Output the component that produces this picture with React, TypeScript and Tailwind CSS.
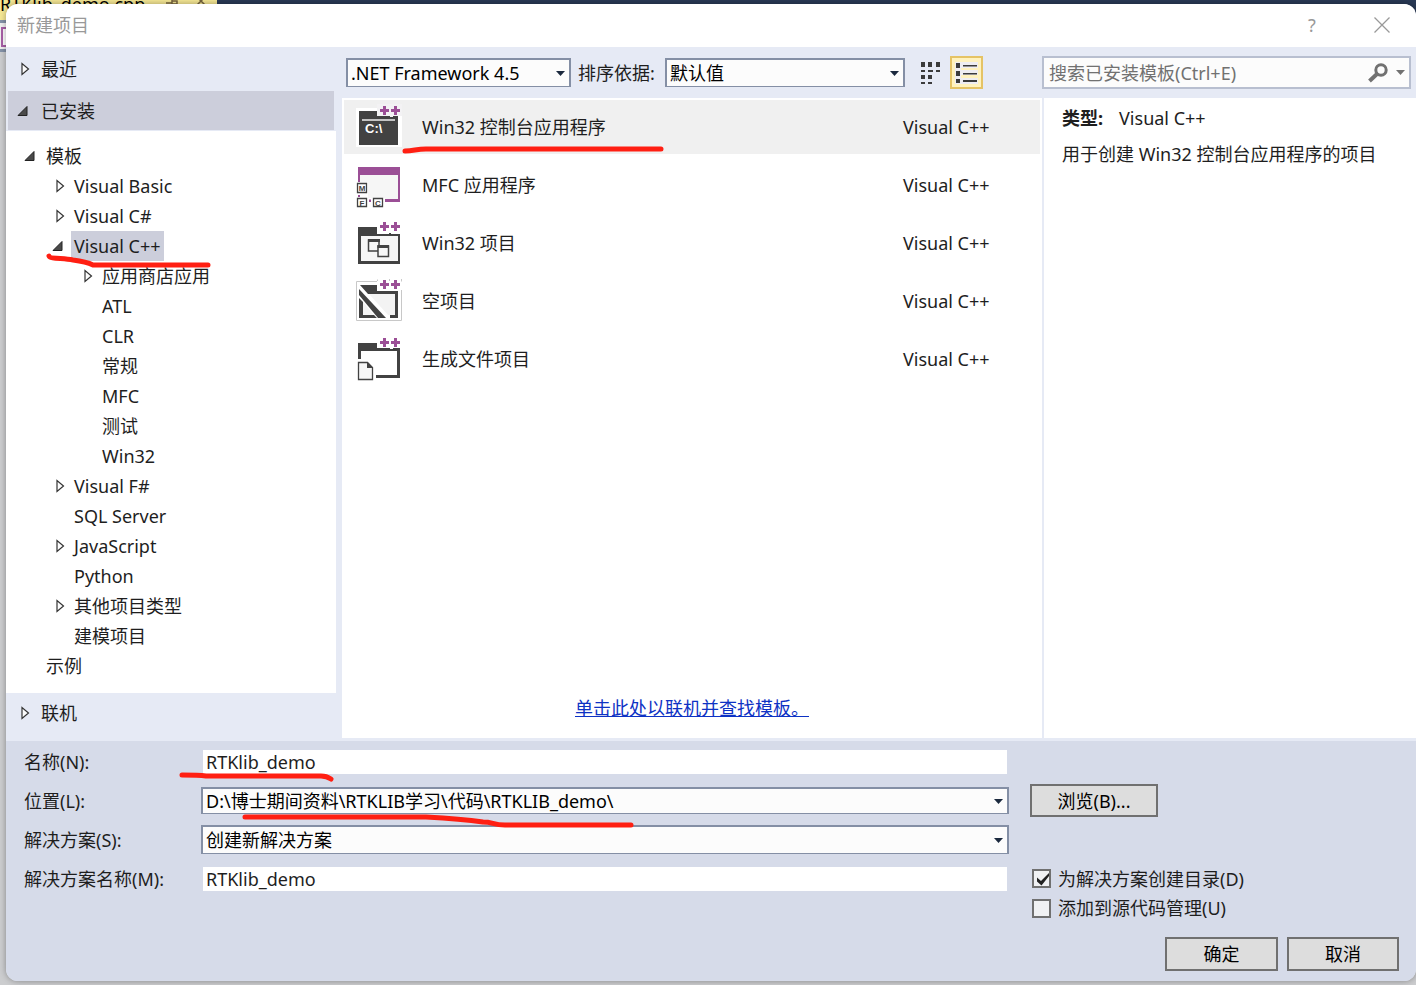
import React, { useState } from 'react';

interface TreeItem {
  label: string;
  level: 0 | 1 | 2;
  arrow?: 'open' | 'closed';
}

const TREE: TreeItem[] = [
  { label: '模板', level: 0, arrow: 'open' },
  { label: 'Visual Basic', level: 1, arrow: 'closed' },
  { label: 'Visual C#', level: 1, arrow: 'closed' },
  { label: 'Visual C++', level: 1, arrow: 'open' },
  { label: '应用商店应用', level: 2, arrow: 'closed' },
  { label: 'ATL', level: 2 },
  { label: 'CLR', level: 2 },
  { label: '常规', level: 2 },
  { label: 'MFC', level: 2 },
  { label: '测试', level: 2 },
  { label: 'Win32', level: 2 },
  { label: 'Visual F#', level: 1, arrow: 'closed' },
  { label: 'SQL Server', level: 1 },
  { label: 'JavaScript', level: 1, arrow: 'closed' },
  { label: 'Python', level: 1 },
  { label: '其他项目类型', level: 1, arrow: 'closed' },
  { label: '建模项目', level: 1 },
  { label: '示例', level: 0 },
];

const INDENT = { 0: 'pl-4', 1: 'pl-11', 2: 'pl-18' };

const Arrow = ({ state }: { state?: 'open' | 'closed' }) => (
  <svg width="20" height="14" viewBox="0 0 20 14" className="shrink-0" aria-hidden="true">
    {state === 'open' && <path d="M11 2.5V11.5H2Z" fill="#4a4a4a" stroke="#222" strokeWidth="1" />}
    {state === 'closed' && <path d="M6 1.5V12.5L12.5 7Z" fill="#fcfcfc" stroke="#333" strokeWidth="1.2" />}
  </svg>
);

// hand-drawn red marker line, laid over the item it underlines
const Marker = ({ d }: { d: string }) => (
  <svg className="pointer-events-none absolute top-0 left-0 z-10 overflow-visible" width="10" height="10" aria-hidden="true">
    <path d={d} fill="none" stroke="#ff1f12" strokeWidth="5" strokeLinecap="round" strokeLinejoin="round" />
  </svg>
);

const PlusPlus = ({ halo = '#fff' }: { halo?: string }) => (
  <g>
    <path d="M21 0H46V12H37V13H34V12H21Z" fill={halo} />
    <path d="M27 2h3v3h3v3h-3v3h-3v-3h-3v-3h3ZM38 2h3v3h3v3h-3v3h-3v-3h-3v-3h3Z" fill="#9b4f96" />
  </g>
);

const ConsoleIcon = () => (
  <svg width="48" height="46" viewBox="0 0 48 46" aria-hidden="true">
    <path d="M0 4H46V43H0Z" fill="#fff" />
    <path d="M3 7H42V41H3Z" fill="#424242" />
    <path d="M6 16H39" stroke="#f0f0f0" strokeWidth="1.500" />
    <PlusPlus halo="#f3f2f4" />
    <text x="9" y="29" fontSize="13" fontWeight="700" fill="#fff" fontFamily="Liberation Sans">C:\</text>
  </svg>
);

const MfcIcon = () => (
  <svg width="48" height="46" viewBox="0 0 48 46" aria-hidden="true">
    <path d="M2 5H44V40H2Z" fill="#9b4f96" />
    <path d="M4 13H42V37H4Z" fill="#f6f6f6" />
    <path d="M0 20H12V46H0ZM12 36H29V46H12Z" fill="#fff" />
    <path d="M2 33H4V35H2ZM13 37.500H15V40H13Z" fill="#9b4f96" />
    <g fill="#fff" stroke="#424242" strokeWidth="1.300">
      <path d="M1.500 21.500H10.500V30.500H1.500ZM1.500 36.500H10.500V44.500H1.500ZM17.500 36.500H26.500V44.500H17.500Z" />
    </g>
    <g fill="#424242" fontSize="8" fontWeight="700" fontFamily="Liberation Sans">
      <text x="2.700" y="29">M</text>
      <text x="3.500" y="43.500">F</text>
      <text x="19" y="43.500">C</text>
    </g>
  </svg>
);

const Win32Icon = () => (
  <svg width="48" height="46" viewBox="0 0 48 46" aria-hidden="true">
    <path d="M2 7H21V14H44V44H2Z" fill="#424242" />
    <path d="M5 16H42V41H5Z" fill="#f6f6f6" />
    <PlusPlus />
    <path d="M33 13H35V15H33Z" fill="#424242" />
    <path d="M12.500 20H23V31H12.500Z" fill="#f6f6f6" stroke="#424242" strokeWidth="1.500" />
    <path d="M12 19H24V22H12Z" fill="#424242" />
    <path d="M22 26H32.500V36.500H22Z" fill="#f6f6f6" stroke="#424242" strokeWidth="1.500" />
    <path d="M21.500 25H33V28H21.500Z" fill="#424242" />
  </svg>
);

const EmptyIcon = () => (
  <svg width="48" height="46" viewBox="0 0 48 46" aria-hidden="true">
    <path d="M.5 3.500H45.500V42.500H.5Z" fill="#fff" stroke="#c8c8c8" />
    {/* folder in two halves either side of the slash */}
    <path d="M4 7H21V13H42V40H34V37H39V16H12Z" fill="#424242" />
    <path d="M13 16H39V37H32Z" fill="#f3f3f3" />
    <path d="M3 20L7 24V37H18L21 40H3Z" fill="#424242" />
    <path d="M7 24V37H18Z" fill="#f3f3f3" />
    <path d="M3 11V17L22 40H30Z" fill="#424242" />
    <PlusPlus />
    <path d="M21.500 3V1.500M33.500 1V3M45.500 1V3.500" stroke="#c8c8c8" />
  </svg>
);

const MakefileIcon = () => (
  <svg width="48" height="46" viewBox="0 0 48 46" aria-hidden="true">
    <path d="M2 7H22V12H44V42H20V39H41V15H5V23H2Z" fill="#424242" />
    <PlusPlus />
    <path d="M2.500 26.500H11.500L16.500 31.500V43.500H2.500Z" fill="#f6f6f6" stroke="#424242" strokeWidth="1.300" />
    <path d="M11 26V32H17Z" fill="#424242" />
  </svg>
);

const TEMPLATES = [
  { name: 'Win32 控制台应用程序', icon: <ConsoleIcon /> },
  { name: 'MFC 应用程序', icon: <MfcIcon /> },
  { name: 'Win32 项目', icon: <Win32Icon /> },
  { name: '空项目', icon: <EmptyIcon /> },
  { name: '生成文件项目', icon: <MakefileIcon /> },
];

interface DropDownProps {
  id: string;
  options: string[];
  className: string;
  label?: string;
}

const DropDown: React.FC<DropDownProps> = ({ id, options, className, label }) => (
  <div className={`relative ${className}`}>
    <select
      id={id}
      aria-label={label}
      className="block h-full w-full appearance-none border-2 border-b border-[#848fa5] bg-[#fcfcfc] pr-6 pl-[3px] text-black outline-none"
    >
      {options.map((o) => <option key={o}>{o}</option>)}
    </select>
    <svg className="pointer-events-none absolute top-1/2 right-1.5 -mt-0.5" width="9" height="5" viewBox="0 0 9 5" aria-hidden="true">
      <path d="M0 0H9L4.500 5Z" fill="#1b293e" />
    </svg>
  </div>
);

export default function App() {
  const [node, setNode] = useState('Visual C++');
  const [template, setTemplate] = useState(0);
  const [name, setName] = useState('RTKlib_demo');
  const [solution, setSolution] = useState('RTKlib_demo');
  const [makeDir, setMakeDir] = useState(true);
  const [sourceControl, setSourceControl] = useState(false);

  return (
    <div className="relative isolate flex min-h-screen flex-col overflow-hidden bg-[#cccdcf] pt-1 pb-1 pl-1.5 text-lg leading-6 text-[#1e1e1e] [font-family:'Noto_Sans','Noto_Sans_CJK_SC',sans-serif]">
      {/* editor window behind the dialog */}
      <div className="absolute inset-x-0 top-0 -z-10 h-5 bg-[#293955]">
        <div className="relative h-5 w-[217px] bg-[#f5e794] text-black">
          <span className="absolute -top-2 left-0">RTKlib_demo.cpp</span>
          <svg className="absolute top-0 left-[166px]" width="44" height="6" viewBox="0 0 44 6" aria-hidden="true">
            <path d="M0 3H6M6 0V5M6 1H11V4H6M31 5L39 -3M39 5L33 -1" fill="none" stroke="#75633d" strokeWidth="1.500" />
          </svg>
        </div>
      </div>
      <div className="absolute top-5 left-0 -z-10 h-8 w-5 border-y-3 border-[#8592a8] bg-[#f0f0f0]">
        <div className="mt-1 ml-px h-5 w-5 border-2 border-[#a85fa6] bg-white" />
      </div>

      <main className="flex flex-1 flex-col overflow-hidden rounded-xl bg-[#e6eaf5] shadow-[0_0_6px_rgba(0,0,0,0.35)]">
        <header className="flex h-[43px] items-center bg-white pb-0.5 pl-[11px] text-[#999]">
          <h1>新建项目</h1>
          <button aria-label="帮助" className="ml-auto w-8">?</button>
          <button aria-label="关闭" className="mr-[26px] ml-[46px]">
            <svg width="16" height="16" viewBox="0 0 16 16" aria-hidden="true">
              <path d="M.5 .5L15.500 15.500M15.500 .5L.5 15.500" stroke="#999" strokeWidth="1.300" />
            </svg>
          </button>
        </header>

        <div className="flex flex-1">
          <nav className="mr-1.5 flex w-[330px] flex-col">
            <button className="flex h-11 items-center pl-2.5"><Arrow state="closed" /><span className="pl-[5px]">最近</span></button>
            <button className="mx-0.5 mb-px flex h-[39px] items-center bg-[#cccedb] pl-2"><Arrow state="open" /><span className="pl-[5px]">已安装</span></button>
            <ul className="flex-1 bg-white pt-2.5 pl-px">
              {TREE.map((item) => (
                <li key={item.label}>
                  <button onClick={() => setNode(item.label)} className={`relative flex h-[30px] items-center ${INDENT[item.level]}`}>
                    <Arrow state={item.arrow} />
                    <span className={`flex h-full items-center px-[3px] ${node === item.label ? 'bg-[#cccedb]' : ''}`}>{item.label}</span>
                    {item.label === 'Visual C++' && <Marker d="M42 25C43 28 55 27 66 29C74 30 82 32 86 34L201 34" />}
                  </button>
                </li>
              ))}
            </ul>
            <button className="flex h-12 items-center pb-2 pl-2.5"><Arrow state="closed" /><span className="pl-[5px]">联机</span></button>
          </nav>

          <div className="flex min-w-0 flex-1 flex-col">
            <div className="flex h-[51px] items-center pr-[5px] pl-1">
              <DropDown id="framework" label="框架" className="h-[29px] w-[225px]" options={['.NET Framework 4.5', '.NET Framework 4']} />
              <label htmlFor="sort" className="ml-[7px] w-20">排序依据:</label>
              <DropDown id="sort" className="ml-[7px] h-[29px] w-60" options={['默认值', '名称升序', '名称降序']} />
              <button aria-label="小图标" className="ml-2 flex h-[33px] w-[33px] items-center justify-center">
                <svg width="20" height="22" viewBox="0 0 20 22" fill="#3b3b3b" aria-hidden="true">
                  <path d="M1 0h4v5h-4zM8 0h4v5h-4zM16 0h4v5h-4zM1 8h4v2h-4zM8 8h5v2h-5zM16 8h4v2h-4zM1 13h4v4h-4zM8 13h4v4h-4zM1 20h4v2h-4zM8 20h4v2h-4z" />
                </svg>
              </button>
              <button aria-label="列表" className="ml-1 flex h-[33px] w-[33px] items-center justify-center border-2 border-[#e5c365] bg-[#fff2be]">
                <svg width="23" height="22" viewBox="0 0 23 22" aria-hidden="true">
                  <path d="M0 0H23V6H6V22H0ZM6 8H23V13H6ZM6 16H23V22H6Z" fill="#eeedf2" />
                  <path d="M1 1h4v5h-4zM1 9h4v5h-4zM1 17h4v4h-4zM8 3h14v1.500h-14zM8 11h14v1.500h-14zM8 18h14v2h-14z" fill="#3b3b3b" />
                </svg>
              </button>
              <div className="ml-auto flex h-[33px] w-[369px] items-center border-2 border-[#b8bfd0] bg-[#fcfcfc] pr-1">
                <input aria-label="搜索已安装模板" placeholder="搜索已安装模板(Ctrl+E)" className="min-w-0 flex-1 bg-transparent pl-[5px] outline-none placeholder:text-[#717171]" />
                <svg width="20" height="20" viewBox="0 0 20 20" aria-hidden="true">
                  <circle cx="13" cy="7" r="5.200" fill="none" stroke="#717171" strokeWidth="3" />
                  <path d="M9 11L1.500 18" stroke="#717171" strokeWidth="4" />
                </svg>
                <svg className="ml-2" width="9" height="5" viewBox="0 0 9 5" aria-hidden="true"><path d="M0 0H9L4.500 5Z" fill="#717171" /></svg>
              </div>
            </div>

            <div className="flex flex-1 gap-0.5 pb-[3px]">
              <section className="flex min-w-0 flex-1 flex-col bg-white p-0.5">
                <ul className="flex flex-col gap-1">
                  {TEMPLATES.map((t, i) => (
                    <li key={t.name}>
                      <button onClick={() => setTemplate(i)} className={`relative flex h-[54px] w-full items-center pl-3 text-left ${template === i ? 'bg-[#f0f0f0]' : ''}`}>
                        {t.icon}
                        <span className="ml-[18px] flex-1">{t.name}</span>
                        <span className="w-[137px]">Visual C++</span>
                        {i === 0 && <Marker d="M61 51C70 51 72 49 82 49L317 49" />}
                      </button>
                    </li>
                  ))}
                </ul>
                <a href="#online" className="mt-auto mb-4 self-center text-[#0e32c4] underline">单击此处以联机并查找模板。</a>
              </section>
              <aside className="w-[372px] bg-white pt-2 pl-[18px]">
                <p><b className="mr-4 inline-block">类型:</b>Visual C++</p>
                <p className="mt-3">用于创建 Win32 控制台应用程序的项目</p>
              </aside>
            </div>
          </div>
        </div>

        <form className="bg-[#d6dbe9] pt-px pr-[17px] pb-2.5 pl-[18px]" onSubmit={(e) => e.preventDefault()}>
          <div className="grid auto-rows-[39px] grid-cols-[177px_1fr_390px] items-center">
            <label htmlFor="name">名称(N):</label>
            <div className="relative px-0.5">
              <input id="name" value={name} onChange={(e) => setName(e.target.value)} className="block h-6 w-full bg-white pl-[3px] outline-none" />
              <Marker d="M-19 25C-8 25 -2 25 5 26L120 26C125 26 127 27 130 29" />
            </div>
            <span />

            <label htmlFor="location">位置(L):</label>
            <div className="relative">
              <DropDown id="location" className="h-[27px]" options={['D:\\博士期间资料\\RTKLIB学习\\代码\\RTKLIB_demo\\']} />
              <Marker d="M44 30L225 30C245 31 262 32 282 35C292 35 292 38 304 38L430 38" />
            </div>
            <button className="ml-[21px] h-[33px] w-32 border-2 border-[#707070] bg-[#ddd] text-black">浏览(B)...</button>

            <label htmlFor="solution">解决方案(S):</label>
            <DropDown id="solution" className="h-[29px]" options={['创建新解决方案', '添加到解决方案']} />
            <span />

            <label htmlFor="solution-name">解决方案名称(M):</label>
            <div className="px-0.5">
              <input id="solution-name" value={solution} onChange={(e) => setSolution(e.target.value)} className="block h-6 w-full bg-white pl-[3px] outline-none" />
            </div>
            <CheckBox label="为解决方案创建目录(D)" checked={makeDir} onChange={setMakeDir} />
          </div>
          <div className="grid h-5 grid-cols-[1fr_390px] items-center">
            <span />
            <CheckBox label="添加到源代码管理(U)" checked={sourceControl} onChange={setSourceControl} />
          </div>
          <div className="mt-[19px] flex justify-end gap-[9px]">
            <button type="submit" className="h-[34px] w-[113px] border-2 border-[#707070] bg-[#ddd] text-black">确定</button>
            <button type="button" className="h-[34px] w-[112px] border-2 border-[#707070] bg-[#ddd] text-black">取消</button>
          </div>
        </form>
      </main>
    </div>
  );
}

interface CheckBoxProps {
  label: string;
  checked: boolean;
  onChange: (v: boolean) => void;
}

function CheckBox({ label, checked, onChange }: CheckBoxProps) {
  return (
    <label className="relative ml-[23px] flex h-5 items-center gap-[7px]">
      <input
        type="checkbox"
        checked={checked}
        onChange={(e) => onChange(e.target.checked)}
        className="h-[19px] w-[19px] appearance-none border-2 border-[#707070] bg-[#f0f1f3]"
      />
      {checked && (
        <svg className="pointer-events-none absolute left-1" width="14" height="14" viewBox="0 0 14 14" aria-hidden="true">
          <path d="M1 5.500L5 9L13 1V4L5.500 13.500L1 9.500Z" fill="#212121" />
        </svg>
      )}
      {label}
    </label>
  );
}
